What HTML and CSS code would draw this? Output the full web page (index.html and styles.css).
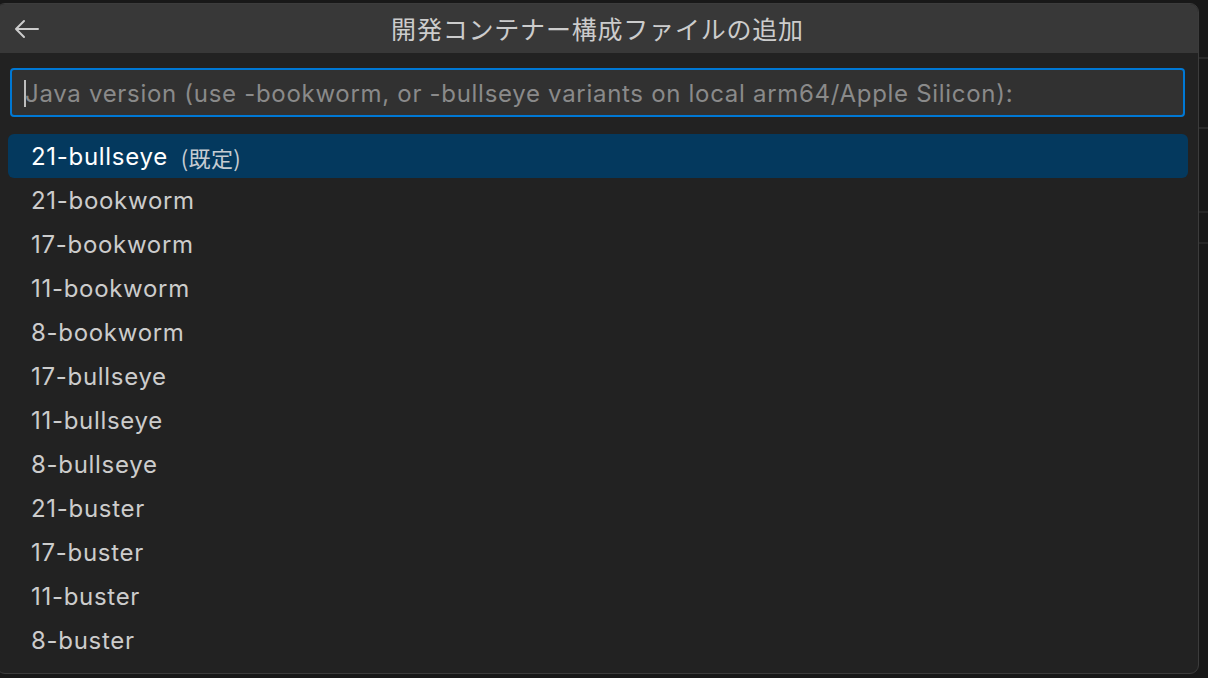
FILE: index.html
```html
<!DOCTYPE html>
<html lang="ja">
<head>
<meta charset="utf-8">
<title>開発コンテナー構成ファイルの追加</title>
<link rel="stylesheet" href="styles.css">
</head>
<body>
<div class="backdrop">
  <div class="quick-input">
    <div class="titlebar">
      <button class="back" aria-label="戻る">
        <svg width="26" height="20" viewBox="0 0 26 20" fill="none" stroke="#cccccc" stroke-width="2" stroke-linecap="round" stroke-linejoin="round">
          <path d="M2 10 H24 M10 2 L2 10 L10 18"/>
        </svg>
      </button>
      <div class="title">開発コンテナー構成ファイルの追加</div>
    </div>
    <div class="input-wrap">
      <div class="input">
        <span class="caret"></span>
        <span class="placeholder">Java version (use -bookworm, or -bullseye variants on local arm64/Apple Silicon):</span>
      </div>
    </div>
    <ul class="list">
      <li class="row selected"><span class="label">21-bullseye</span><span class="desc">(既定)</span></li>
      <li class="row"><span class="label">21-bookworm</span></li>
      <li class="row"><span class="label">17-bookworm</span></li>
      <li class="row"><span class="label">11-bookworm</span></li>
      <li class="row"><span class="label">8-bookworm</span></li>
      <li class="row"><span class="label">17-bullseye</span></li>
      <li class="row"><span class="label">11-bullseye</span></li>
      <li class="row"><span class="label">8-bullseye</span></li>
      <li class="row"><span class="label">21-buster</span></li>
      <li class="row"><span class="label">17-buster</span></li>
      <li class="row"><span class="label">11-buster</span></li>
      <li class="row"><span class="label">8-buster</span></li>
    </ul>
  </div>
</div>
</body>
</html>
```

FILE: styles.css
```css
html, body {
  margin: 0;
  padding: 0;
  height: 100%;
  overflow: hidden;
}

body {
  background-color: #181818;
  background-image:
    linear-gradient(to bottom,
      transparent 57px, #2a2a2a 57px, #2a2a2a 59px, transparent 59px,
      transparent 127px, #2a2a2a 127px, #2a2a2a 129px, transparent 129px,
      transparent 211px, #262626 211px, #262626 213px, transparent 213px,
      transparent 242px, #262626 242px, #262626 244px, transparent 244px);
  font-family: "Inter", "Noto Sans CJK JP", sans-serif;
}

.backdrop {
  padding-top: 3px;
}

.quick-input {
  width: 1203px;
  height: 671px;
  margin-left: -4px;
  background: #222222;
  border: 1px solid #3c3c3c;
  border-radius: 9px;
  overflow: hidden;
  box-sizing: border-box;
}

.titlebar {
  height: 49px;
  background: #383838;
  display: flex;
  align-items: center;
}

.back {
  background: none;
  border: 0;
  padding: 0;
  margin-left: 17px;
  width: 26px;
  height: 20px;
  display: flex;
  align-items: center;
  justify-content: center;
}

.title {
  flex: 1;
  text-align: center;
  margin-right: 43px;
  color: #cccccc;
  font-family: "Noto Sans CJK JP", sans-serif;
  font-size: 25px;
  line-height: 47px;
  letter-spacing: 0.8px;
}

.input-wrap {
  padding: 15px 13px 0 13px;
}

.input {
  height: 49px;
  box-sizing: border-box;
  background: #313131;
  border: 2px solid #0078d4;
  border-radius: 4px;
  display: flex;
  align-items: center;
  padding-left: 12px;
  padding-top: 2px;
}

.caret {
  width: 2px;
  height: 27px;
  background: #bdbdbd;
  margin-right: -1px;
}

.placeholder {
  color: #8a8a8a;
  font-size: 24px;
  letter-spacing: 0.7px;
  white-space: nowrap;
}

.list {
  list-style: none;
  margin: 17px 0 0 0;
  padding: 0 10px 0 11px;
}

.row {
  height: 44px;
  display: flex;
  align-items: center;
  padding-left: 23px;
  padding-top: 1px;
  box-sizing: border-box;
  border-radius: 6px;
  color: #cccccc;
  font-size: 24px;
  letter-spacing: 0.7px;
}

.row.selected {
  background: #04395e;
  color: #ffffff;
}

.desc {
  margin-left: 13px;
  font-size: 22px;
  letter-spacing: 0.3px;
  color: #c6ccd2;
  font-family: "Noto Sans CJK JP", sans-serif;
}
```
